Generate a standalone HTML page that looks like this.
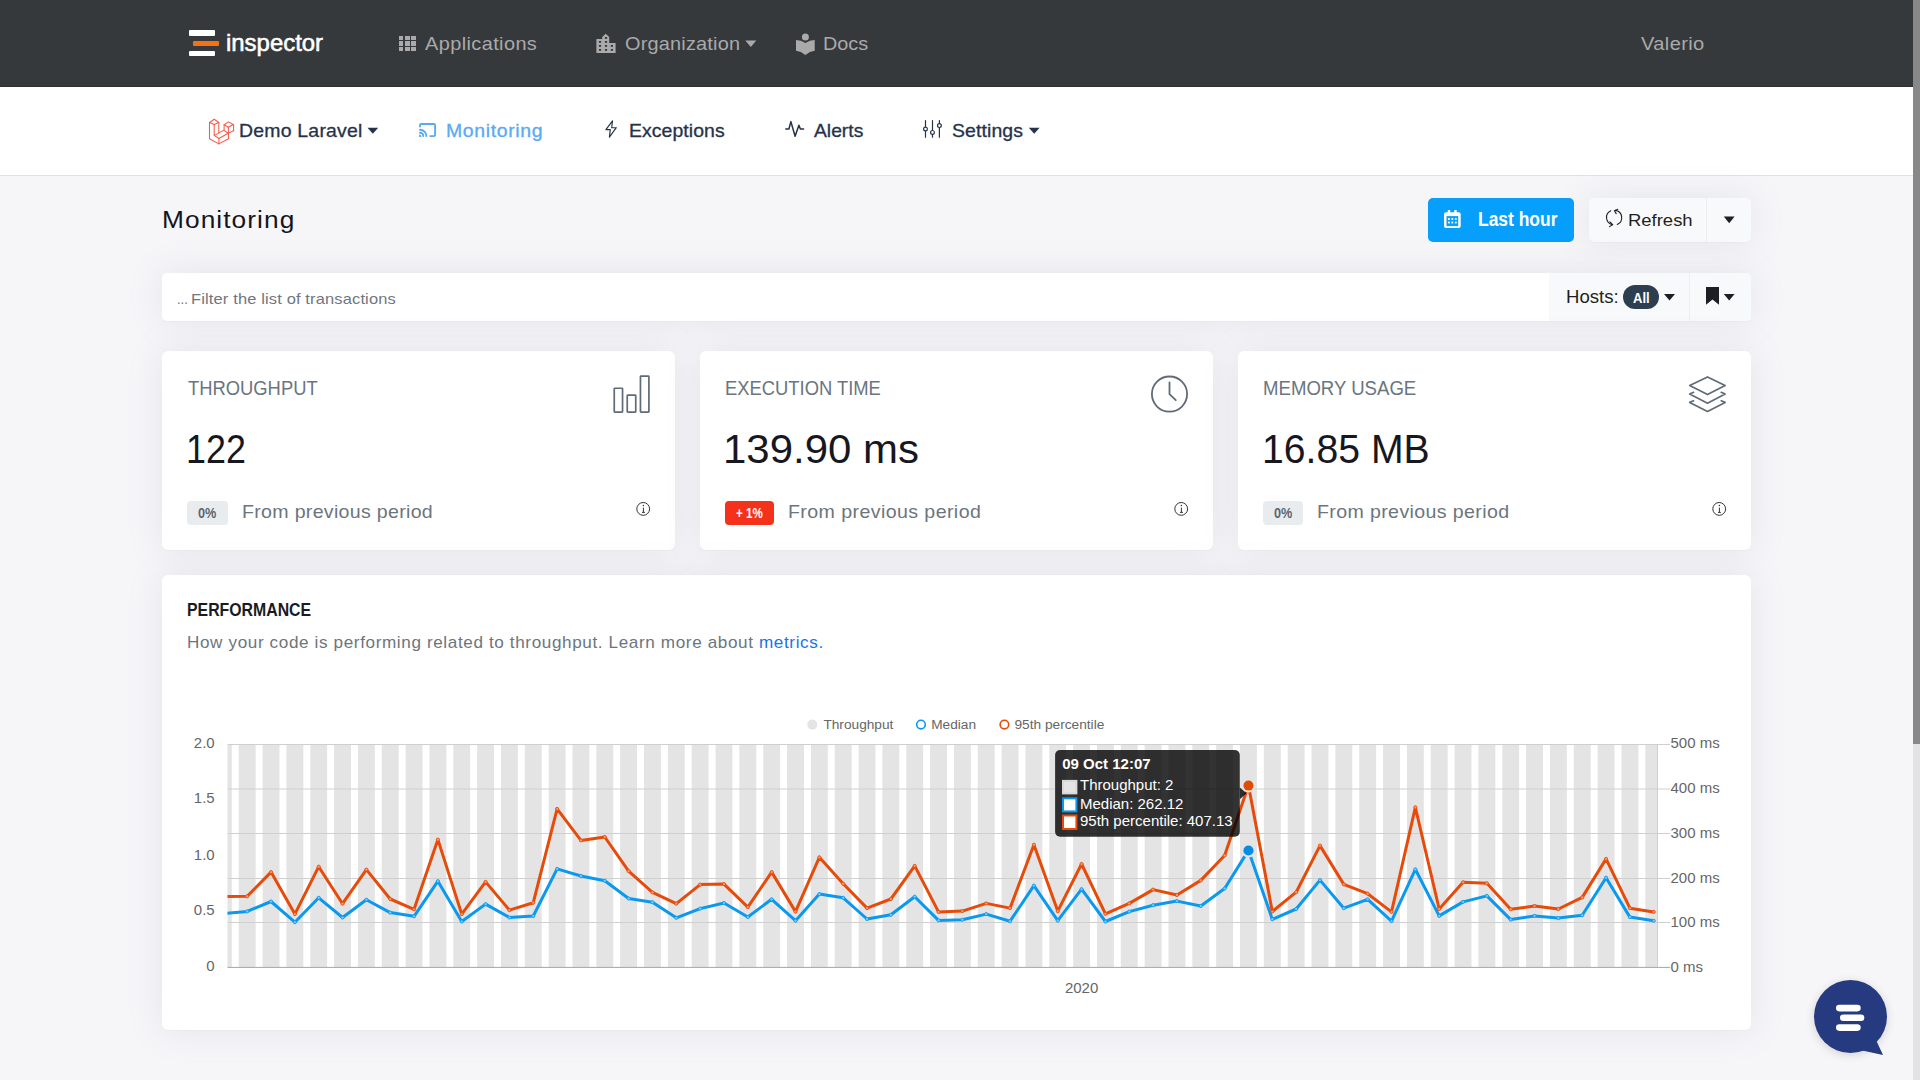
<!DOCTYPE html>
<html><head><meta charset="utf-8"><title>Monitoring</title>
<style>
html,body{margin:0;padding:0;}
body{width:1920px;height:1080px;overflow:hidden;position:relative;background:#f6f6f9;font-family:"Liberation Sans",sans-serif;}
.t{position:absolute;white-space:nowrap;line-height:1;}
.r{position:absolute;}
.ch{position:absolute;left:0;top:0;overflow:visible;}
.ax{font-family:"Liberation Sans",sans-serif;font-size:15px;fill:#666666;}
.lg{font-family:"Liberation Sans",sans-serif;font-size:13.7px;fill:#666666;}
.tt{font-family:"Liberation Sans",sans-serif;font-size:15px;fill:#ffffff;}
</style></head><body>
<div class="r" style="left:0;top:0;width:1920px;height:86px;background:#36393c;border-bottom:1px solid #2b2e31"></div>
<div class="r" style="left:0;top:87px;width:1920px;height:88px;background:#ffffff;border-bottom:1px solid #dee2e6"></div>
<div class="r" style="left:1428px;top:198px;width:146px;height:44px;background:#069ffb;border-radius:5px"></div>
<div class="r" style="left:1589px;top:198px;width:162px;height:44px;background:#f8f9fa;border-radius:5px;box-shadow:0 0 35px 0 rgba(145,145,155,0.16),0 1px 1px rgba(0,0,0,0.02)"></div>
<div class="r" style="left:1706px;top:198px;width:1px;height:44px;background:#eceef0"></div>
<div class="r" style="left:162px;top:273px;width:1589px;height:48px;background:#ffffff;border-radius:5px;box-shadow:0 0 35px 0 rgba(145,145,155,0.16),0 1px 1px rgba(0,0,0,0.02)"></div>
<div class="r" style="left:1549px;top:273px;width:202px;height:48px;background:#f8f9fa;border-radius:0 5px 5px 0"></div>
<div class="r" style="left:1689px;top:273px;width:1px;height:48px;background:#eceef0"></div>
<div class="r" style="left:1623px;top:285px;width:36px;height:24px;background:#2c3e50;border-radius:12px"></div>
<div class="r" style="left:162px;top:351px;width:513px;height:199px;background:#fff;border-radius:6px;box-shadow:0 0 35px 0 rgba(145,145,155,0.16),0 1px 1px rgba(0,0,0,0.02)"></div>
<div class="r" style="left:700px;top:351px;width:513px;height:199px;background:#fff;border-radius:6px;box-shadow:0 0 35px 0 rgba(145,145,155,0.16),0 1px 1px rgba(0,0,0,0.02)"></div>
<div class="r" style="left:1238px;top:351px;width:513px;height:199px;background:#fff;border-radius:6px;box-shadow:0 0 35px 0 rgba(145,145,155,0.16),0 1px 1px rgba(0,0,0,0.02)"></div>
<div class="r" style="left:187px;top:501px;width:41px;height:24px;background:#e9ecef;border-radius:4px"></div>
<div class="r" style="left:725px;top:501px;width:49px;height:24px;background:#f4321c;border-radius:4px"></div>
<div class="r" style="left:1263px;top:501px;width:40px;height:24px;background:#e9ecef;border-radius:4px"></div>
<div class="r" style="left:162px;top:575px;width:1589px;height:455px;background:#fff;border-radius:6px;box-shadow:0 0 35px 0 rgba(145,145,155,0.16),0 1px 1px rgba(0,0,0,0.02)"></div>
<div class="t" style="left:226.20px;top:31px;font-size:24.00px;font-weight:400;color:#ffffff;letter-spacing:0.000px;transform:scaleX(0.9970);transform-origin:0 0;-webkit-text-stroke:0.55px #ffffff;">inspector</div>
<div class="t" style="left:425.20px;top:35px;font-size:18.60px;font-weight:400;color:#aaaaaa;letter-spacing:0.386px;transform:scaleX(1.0700);transform-origin:0 0;">Applications</div>
<div class="t" style="left:625.30px;top:35px;font-size:18.60px;font-weight:400;color:#aaaaaa;letter-spacing:0.192px;transform:scaleX(1.0700);transform-origin:0 0;">Organization</div>
<div class="t" style="left:823.43px;top:35px;font-size:18.60px;font-weight:400;color:#aaaaaa;letter-spacing:0.000px;transform:scaleX(1.0666);transform-origin:0 0;">Docs</div>
<div class="t" style="left:1641.00px;top:35px;font-size:18.75px;font-weight:400;color:#aaaaaa;letter-spacing:0.358px;transform:scaleX(1.0700);transform-origin:0 0;">Valerio</div>
<div class="t" style="left:239.03px;top:122px;font-size:18.17px;font-weight:400;color:#25324a;letter-spacing:0.207px;transform:scaleX(1.0700);transform-origin:0 0;-webkit-text-stroke:0.3px #25324a;">Demo Laravel</div>
<div class="t" style="left:446.23px;top:122px;font-size:18.17px;font-weight:400;color:#5aaaf3;letter-spacing:0.596px;transform:scaleX(1.0700);transform-origin:0 0;-webkit-text-stroke:0.3px #5aaaf3;">Monitoring</div>
<div class="t" style="left:629.23px;top:122px;font-size:18.17px;font-weight:400;color:#25324a;letter-spacing:0.065px;transform:scaleX(1.0700);transform-origin:0 0;-webkit-text-stroke:0.3px #25324a;">Exceptions</div>
<div class="t" style="left:814.20px;top:122px;font-size:18.17px;font-weight:400;color:#25324a;letter-spacing:0.000px;transform:scaleX(1.0619);transform-origin:0 0;-webkit-text-stroke:0.3px #25324a;">Alerts</div>
<div class="t" style="left:952.00px;top:122px;font-size:18.17px;font-weight:400;color:#25324a;letter-spacing:0.105px;transform:scaleX(1.0700);transform-origin:0 0;-webkit-text-stroke:0.3px #25324a;">Settings</div>
<div class="t" style="left:162.16px;top:208px;font-size:24.56px;font-weight:400;color:#14151c;letter-spacing:1.003px;transform:scaleX(1.0700);transform-origin:0 0;">Monitoring</div>
<div class="t" style="left:1478.10px;top:210px;font-size:19.33px;font-weight:700;color:#ffffff;letter-spacing:0.000px;transform:scaleX(0.9025);transform-origin:0 0;">Last hour</div>
<div class="t" style="left:1627.63px;top:212px;font-size:17.30px;font-weight:400;color:#1d1f24;letter-spacing:-0.000px;transform:scaleX(1.0679);transform-origin:0 0;">Refresh</div>
<div class="t" style="left:176.91px;top:291px;font-size:15.41px;font-weight:400;color:#6c757d;letter-spacing:0.000px;transform:scaleX(0.8387);transform-origin:0 0;">...</div>
<div class="t" style="left:190.73px;top:291px;font-size:15.41px;font-weight:400;color:#6f777f;letter-spacing:0.128px;transform:scaleX(1.0700);transform-origin:0 0;">Filter the list of transactions</div>
<div class="t" style="left:1566.14px;top:289px;font-size:17.59px;font-weight:400;color:#1d1f24;letter-spacing:-0.000px;transform:scaleX(1.0557);transform-origin:0 0;">Hosts:</div>
<div class="t" style="left:1632.50px;top:290px;font-size:15.41px;font-weight:700;color:#ffffff;letter-spacing:0.000px;transform:scaleX(0.8458);transform-origin:0 0;">All</div>
<div class="t" style="left:188.10px;top:379px;font-size:19.91px;font-weight:400;color:#6a7580;letter-spacing:0.000px;transform:scaleX(0.9231);transform-origin:0 0;">THROUGHPUT</div>
<div class="t" style="left:186.06px;top:429px;font-size:40.80px;font-weight:400;color:#17181f;letter-spacing:0.000px;transform:scaleX(0.8788);transform-origin:0 0;">122</div>
<div class="t" style="left:242.43px;top:503px;font-size:18.31px;font-weight:400;color:#6c757d;letter-spacing:0.283px;transform:scaleX(1.0700);transform-origin:0 0;">From previous period</div>
<div class="t" style="left:724.58px;top:379px;font-size:19.91px;font-weight:400;color:#6a7580;letter-spacing:0.000px;transform:scaleX(0.9230);transform-origin:0 0;">EXECUTION TIME</div>
<div class="t" style="left:722.71px;top:429px;font-size:40.80px;font-weight:400;color:#17181f;letter-spacing:-0.000px;transform:scaleX(1.0285);transform-origin:0 0;">139.90 ms</div>
<div class="t" style="left:787.83px;top:503px;font-size:18.31px;font-weight:400;color:#6c757d;letter-spacing:0.386px;transform:scaleX(1.0700);transform-origin:0 0;">From previous period</div>
<div class="t" style="left:1262.87px;top:379px;font-size:19.91px;font-weight:400;color:#6a7580;letter-spacing:0.000px;transform:scaleX(0.9340);transform-origin:0 0;">MEMORY USAGE</div>
<div class="t" style="left:1261.82px;top:429px;font-size:40.80px;font-weight:400;color:#17181f;letter-spacing:0.000px;transform:scaleX(0.9600);transform-origin:0 0;">16.85 MB</div>
<div class="t" style="left:1317.23px;top:503px;font-size:18.31px;font-weight:400;color:#6c757d;letter-spacing:0.347px;transform:scaleX(1.0700);transform-origin:0 0;">From previous period</div>
<div class="t" style="left:198.20px;top:505px;font-size:15.12px;font-weight:700;color:#5b6671;letter-spacing:0.000px;transform:scaleX(0.8392);transform-origin:0 0;">0%</div>
<div class="t" style="left:735.90px;top:505px;font-size:15.12px;font-weight:700;color:#ffffff;letter-spacing:0.000px;transform:scaleX(0.7650);transform-origin:0 0;">+ 1%</div>
<div class="t" style="left:1274.20px;top:505px;font-size:15.12px;font-weight:700;color:#5b6671;letter-spacing:0.000px;transform:scaleX(0.8392);transform-origin:0 0;">0%</div>
<div class="t" style="left:187.13px;top:601px;font-size:18.17px;font-weight:700;color:#1a1b22;letter-spacing:0.000px;transform:scaleX(0.8723);transform-origin:0 0;">PERFORMANCE</div>
<div class="t" style="left:186.93px;top:635px;font-size:15.99px;font-weight:400;color:#6c757d;letter-spacing:0.583px;transform:scaleX(1.0700);transform-origin:0 0;">How your code is performing related to throughput. Learn more about <span style="color:#1a73e8">metrics.</span></div>
<div class="r" style="left:189.2px;top:30.4px;width:25.8px;height:5.4px;background:#fff;border-radius:1px"></div>
<div class="r" style="left:193px;top:40.8px;width:26px;height:5.45px;background:#f47216;border-radius:1px"></div>
<div class="r" style="left:189.2px;top:50.8px;width:25.8px;height:5.45px;background:#fff;border-radius:1px"></div>
<div class="r" style="left:398.80px;top:35.80px;width:4.6px;height:4.4px;background:#aaaaaa"></div>
<div class="r" style="left:405.05px;top:35.80px;width:4.6px;height:4.4px;background:#aaaaaa"></div>
<div class="r" style="left:411.30px;top:35.80px;width:4.6px;height:4.4px;background:#aaaaaa"></div>
<div class="r" style="left:398.80px;top:41.40px;width:4.6px;height:4.4px;background:#aaaaaa"></div>
<div class="r" style="left:405.05px;top:41.40px;width:4.6px;height:4.4px;background:#aaaaaa"></div>
<div class="r" style="left:411.30px;top:41.40px;width:4.6px;height:4.4px;background:#aaaaaa"></div>
<div class="r" style="left:398.80px;top:47.00px;width:4.6px;height:4.4px;background:#aaaaaa"></div>
<div class="r" style="left:405.05px;top:47.00px;width:4.6px;height:4.4px;background:#aaaaaa"></div>
<div class="r" style="left:411.30px;top:47.00px;width:4.6px;height:4.4px;background:#aaaaaa"></div>
<svg class="ch" width="1920" height="1080" viewBox="0 0 1920 1080">
<g fill="#aaaaaa"><path d="M596.4,52.9 V39.1 H602.2 V36.9 L605.7,33.8 L609.2,36.9 V43 H615.6 V52.9 Z"/></g>
<g fill="#36393c"><rect x="604.9" y="37.0" width="2.2" height="1.8"/><rect x="598.9" y="41.0" width="2.2" height="1.8"/><rect x="604.9" y="41.0" width="2.2" height="1.8"/><rect x="598.9" y="45.0" width="2.2" height="1.8"/><rect x="604.9" y="45.0" width="2.2" height="1.8"/><rect x="610.8" y="45.0" width="2.2" height="1.8"/><rect x="598.9" y="49.0" width="2.2" height="1.8"/><rect x="604.9" y="49.0" width="2.2" height="1.8"/><rect x="610.8" y="49.0" width="2.2" height="1.8"/></g>
<polygon points="745.3,40.6 756.3,40.6 750.8,46.9" fill="#aaaaaa"/>
<circle cx="805.4" cy="36.9" r="3.5" fill="#aaaaaa"/>
<path d="M796,39.9 Q801,40 805.4,43 Q809.8,40 814.7,39.9 V50.8 Q809.8,51.2 805.4,54.9 Q801,51.2 796,50.8 Z" fill="#aaaaaa"/>
<g fill="none" stroke="#f35b4a" stroke-width="1.05" stroke-linejoin="round" stroke-linecap="round"><path d="M209.5,122.5 L214.2,119.2 L218.8,122.5 L214.2,124.5 Z"/><path d="M209.5,122.5 V138.8 L218.9,143.9 L228.5,138.8 V133.3"/><path d="M214.2,124.5 V135.4 L218.9,138.5 V143.9"/><path d="M218.8,122.5 V132.6"/><path d="M214.4,135.4 L223.7,130.4"/><path d="M218.9,138.5 L228.2,133.3"/><path d="M224.1,124.7 L228.5,121.9 L233.2,124.5 L228.4,127.2 Z"/><path d="M224.1,124.7 V130.4 L228.2,133.3 L233.6,130.7 V124.5"/><path d="M228.4,127.2 V133.3"/></g>
<polygon points="367.5,127.7 378.2,127.7 372.85,133.7" fill="#25324a"/>
<g fill="none" stroke="#5aaaf3" stroke-width="1.9" stroke-linecap="round"><path d="M420,126.6 V125.3 Q420,124 421.3,124 H433.8 Q435.1,124 435.1,125.3 V134.8 Q435.1,136.1 433.8,136.1 H430.2"/><path d="M420,129.7 A6.4,6.4 0 0 1 426.4,136.1"/><path d="M420,132.8 A3.3,3.3 0 0 1 423.3,136.1"/></g><path d="M419.1,134.6 A2.4,2.4 0 0 1 421.5,137 H419.1 Z" fill="#5aaaf3"/>
<path d="M612.5,120.9 L605.9,129.6 H610.3 L609.4,137.1 L616.3,127.7 H611.7 Z" fill="none" stroke="#25324a" stroke-width="1.15" stroke-linejoin="round"/>
<polyline points="785.8,129.1 788.9,129.1 790.9,121.6 795.1,136.3 798.9,125.2 800.4,129.1 803.6,129.1" fill="none" stroke="#25324a" stroke-width="1.5" stroke-linejoin="round" stroke-linecap="round"/>
<g stroke="#25324a" stroke-width="1.2" fill="none" stroke-linecap="round"><path d="M925.5,120.6 V137.2 M932.5,120.6 V137.2 M939.4,120.6 V137.2"/></g><g fill="#fff" stroke="#25324a" stroke-width="1.2"><circle cx="925.5" cy="129" r="1.9"/><circle cx="932.5" cy="132.4" r="1.9"/><circle cx="939.4" cy="125.6" r="1.9"/></g>
<polygon points="1028.8,127.7 1039.6,127.7 1034.2,133.7" fill="#25324a"/>
<g fill="#fff"><rect x="1444" y="212.2" width="16.7" height="15.9" rx="2"/><rect x="1447.8" y="210" width="2.4" height="4"/><rect x="1454.3" y="210" width="2.4" height="4"/></g><rect x="1446.5" y="216.1" width="11.7" height="10" fill="#069ffb"/><g fill="#fff"><rect x="1448" y="218.1" width="1.8" height="1.8"/><rect x="1448" y="221.6" width="1.8" height="1.8"/><rect x="1451.4" y="218.1" width="1.8" height="1.8"/><rect x="1451.4" y="221.6" width="1.8" height="1.8"/><rect x="1454.9" y="218.1" width="1.8" height="1.8"/><rect x="1454.9" y="221.6" width="1.8" height="1.8"/></g>
<g fill="none" stroke="#1d1f24" stroke-width="1.1" stroke-linecap="round"><path d="M1610.8,210.8 A7.3,7.3 0 0 0 1612.4,224.6"/><path d="M1609.9,221.8 L1612.6,224.7 L1609.5,226.6"/><path d="M1617.2,224.4 A7.3,7.3 0 0 0 1615.2,210.4"/><path d="M1617.8,209.2 L1614.5,210.7 L1616.2,213.6"/></g>
<polygon points="1723.8,216.6 1734.6,216.6 1729.2,223.2" fill="#1d1f24"/>
<polygon points="1664,294 1675,294 1669.5,300.4" fill="#1d1f24"/>
<path d="M1706,287 H1719 V304.8 L1712.5,299.5 L1706,304.8 Z" fill="#1d1f24"/>
<polygon points="1723.8,294 1734.6,294 1729.2,300.4" fill="#1d1f24"/>
<g fill="none" stroke="#5f6b78" stroke-width="1.7"><rect x="614.25" y="388.25" width="8.3" height="23.9" rx="0.6"/><rect x="627.25" y="395.15" width="8.5" height="17" rx="0.6"/><rect x="640.45" y="376.15" width="8.45" height="36" rx="0.6"/></g>
<g fill="none" stroke="#5f6b78" stroke-width="1.8"><circle cx="1169.5" cy="394.1" r="17.6"/><path d="M1169.5,382.3 V394.1 L1175.8,400.2" stroke-linecap="round" stroke-linejoin="round"/></g>
<g fill="none" stroke="#5f6b78" stroke-width="1.7" stroke-linejoin="round" stroke-linecap="round"><path d="M1707.5,376.9 L1725.1,385.6 L1707.5,394.6 L1689.7,385.6 Z"/><path d="M1693.6,392.3 L1689.7,394.1 L1707.5,403.2 L1725.1,394.1 L1721.2,392.3"/><path d="M1693.6,400.8 L1689.7,402.4 L1707.5,411.5 L1725.1,402.4 L1721.2,400.8"/></g>
<circle cx="643.2" cy="508.9" r="6.4" fill="none" stroke="#2f353b" stroke-width="1"/><circle cx="643.4" cy="505.6" r="0.75" fill="#2f353b"/><path d="M643.4,507.6 V512.3 M642.0,512.4 H644.9" stroke="#2f353b" stroke-width="1"/>
<circle cx="1181.2" cy="508.9" r="6.4" fill="none" stroke="#2f353b" stroke-width="1"/><circle cx="1181.4" cy="505.6" r="0.75" fill="#2f353b"/><path d="M1181.4,507.6 V512.3 M1180.0,512.4 H1182.9" stroke="#2f353b" stroke-width="1"/>
<circle cx="1719.2" cy="508.9" r="6.4" fill="none" stroke="#2f353b" stroke-width="1"/><circle cx="1719.4" cy="505.6" r="0.75" fill="#2f353b"/><path d="M1719.4,507.6 V512.3 M1718.0,512.4 H1720.9" stroke="#2f353b" stroke-width="1"/>
</svg>
<svg class="ch" width="1920" height="1080" viewBox="0 0 1920 1080">
<defs><clipPath id="pc"><rect x="227.5" y="738.5" width="1430.0" height="234.89999999999998"/></clipPath><clipPath id="pb"><rect x="227.5" y="744.5" width="1430.0" height="222.89999999999998"/></clipPath></defs>
<g clip-path="url(#pb)" fill="#e4e4e4">
<rect x="214.90" y="744.5" width="16.9" height="222.89999999999998"/>
<rect x="238.74" y="744.5" width="16.9" height="222.89999999999998"/>
<rect x="262.58" y="744.5" width="16.9" height="222.89999999999998"/>
<rect x="286.42" y="744.5" width="16.9" height="222.89999999999998"/>
<rect x="310.26" y="744.5" width="16.9" height="222.89999999999998"/>
<rect x="334.10" y="744.5" width="16.9" height="222.89999999999998"/>
<rect x="357.94" y="744.5" width="16.9" height="222.89999999999998"/>
<rect x="381.78" y="744.5" width="16.9" height="222.89999999999998"/>
<rect x="405.62" y="744.5" width="16.9" height="222.89999999999998"/>
<rect x="429.46" y="744.5" width="16.9" height="222.89999999999998"/>
<rect x="453.30" y="744.5" width="16.9" height="222.89999999999998"/>
<rect x="477.14" y="744.5" width="16.9" height="222.89999999999998"/>
<rect x="500.98" y="744.5" width="16.9" height="222.89999999999998"/>
<rect x="524.82" y="744.5" width="16.9" height="222.89999999999998"/>
<rect x="548.66" y="744.5" width="16.9" height="222.89999999999998"/>
<rect x="572.50" y="744.5" width="16.9" height="222.89999999999998"/>
<rect x="596.34" y="744.5" width="16.9" height="222.89999999999998"/>
<rect x="620.18" y="744.5" width="16.9" height="222.89999999999998"/>
<rect x="644.02" y="744.5" width="16.9" height="222.89999999999998"/>
<rect x="667.86" y="744.5" width="16.9" height="222.89999999999998"/>
<rect x="691.70" y="744.5" width="16.9" height="222.89999999999998"/>
<rect x="715.54" y="744.5" width="16.9" height="222.89999999999998"/>
<rect x="739.38" y="744.5" width="16.9" height="222.89999999999998"/>
<rect x="763.22" y="744.5" width="16.9" height="222.89999999999998"/>
<rect x="787.06" y="744.5" width="16.9" height="222.89999999999998"/>
<rect x="810.90" y="744.5" width="16.9" height="222.89999999999998"/>
<rect x="834.74" y="744.5" width="16.9" height="222.89999999999998"/>
<rect x="858.58" y="744.5" width="16.9" height="222.89999999999998"/>
<rect x="882.42" y="744.5" width="16.9" height="222.89999999999998"/>
<rect x="906.26" y="744.5" width="16.9" height="222.89999999999998"/>
<rect x="930.10" y="744.5" width="16.9" height="222.89999999999998"/>
<rect x="953.94" y="744.5" width="16.9" height="222.89999999999998"/>
<rect x="977.78" y="744.5" width="16.9" height="222.89999999999998"/>
<rect x="1001.62" y="744.5" width="16.9" height="222.89999999999998"/>
<rect x="1025.46" y="744.5" width="16.9" height="222.89999999999998"/>
<rect x="1049.30" y="744.5" width="16.9" height="222.89999999999998"/>
<rect x="1073.14" y="744.5" width="16.9" height="222.89999999999998"/>
<rect x="1096.98" y="744.5" width="16.9" height="222.89999999999998"/>
<rect x="1120.82" y="744.5" width="16.9" height="222.89999999999998"/>
<rect x="1144.66" y="744.5" width="16.9" height="222.89999999999998"/>
<rect x="1168.50" y="744.5" width="16.9" height="222.89999999999998"/>
<rect x="1192.34" y="744.5" width="16.9" height="222.89999999999998"/>
<rect x="1216.18" y="744.5" width="16.9" height="222.89999999999998"/>
<rect x="1240.02" y="744.5" width="16.9" height="222.89999999999998"/>
<rect x="1263.86" y="744.5" width="16.9" height="222.89999999999998"/>
<rect x="1287.70" y="744.5" width="16.9" height="222.89999999999998"/>
<rect x="1311.54" y="744.5" width="16.9" height="222.89999999999998"/>
<rect x="1335.38" y="744.5" width="16.9" height="222.89999999999998"/>
<rect x="1359.22" y="744.5" width="16.9" height="222.89999999999998"/>
<rect x="1383.06" y="744.5" width="16.9" height="222.89999999999998"/>
<rect x="1406.90" y="744.5" width="16.9" height="222.89999999999998"/>
<rect x="1430.74" y="744.5" width="16.9" height="222.89999999999998"/>
<rect x="1454.58" y="744.5" width="16.9" height="222.89999999999998"/>
<rect x="1478.42" y="744.5" width="16.9" height="222.89999999999998"/>
<rect x="1502.26" y="744.5" width="16.9" height="222.89999999999998"/>
<rect x="1526.10" y="744.5" width="16.9" height="222.89999999999998"/>
<rect x="1549.94" y="744.5" width="16.9" height="222.89999999999998"/>
<rect x="1573.78" y="744.5" width="16.9" height="222.89999999999998"/>
<rect x="1597.62" y="744.5" width="16.9" height="222.89999999999998"/>
<rect x="1621.46" y="744.5" width="16.9" height="222.89999999999998"/>
<rect x="1645.30" y="744.5" width="16.9" height="222.89999999999998"/>
</g>
<rect x="227.5" y="744.0" width="1442.5" height="1" fill="#cfcfcf"/>
<rect x="227.5" y="788.5" width="1442.5" height="1" fill="#cfcfcf"/>
<rect x="227.5" y="833.0" width="1442.5" height="1" fill="#cfcfcf"/>
<rect x="227.5" y="878.0" width="1442.5" height="1" fill="#cfcfcf"/>
<rect x="227.5" y="922.0" width="1442.5" height="1" fill="#cfcfcf"/>
<rect x="227.5" y="966.9" width="1442.5" height="1" fill="#a6a6a6"/>
<rect x="1657.0" y="744.0" width="1" height="222.89999999999998" fill="#cfcfcf"/>
<text x="214.7" y="747.8" text-anchor="end" class="ax">2.0</text>
<text x="214.7" y="803.4" text-anchor="end" class="ax">1.5</text>
<text x="214.7" y="859.6" text-anchor="end" class="ax">1.0</text>
<text x="214.7" y="915.1" text-anchor="end" class="ax">0.5</text>
<text x="214.7" y="971.2" text-anchor="end" class="ax">0</text>
<text x="1670.5" y="747.8" class="ax">500 ms</text>
<text x="1670.5" y="792.8" class="ax">400 ms</text>
<text x="1670.5" y="837.8" class="ax">300 ms</text>
<text x="1670.5" y="882.8" class="ax">200 ms</text>
<text x="1670.5" y="927.1" class="ax">100 ms</text>
<text x="1670.5" y="971.8" class="ax">0 ms</text>
<text x="1081.6" y="993" text-anchor="middle" class="ax">2020</text>
<circle cx="812.3" cy="724.6" r="5" fill="#e4e4e4"/>
<text x="823.4" y="729" class="lg">Throughput</text>
<circle cx="921" cy="724.6" r="4.3" fill="none" stroke="#0a99ef" stroke-width="1.6"/>
<text x="931.2" y="729" class="lg">Median</text>
<circle cx="1004.4" cy="724.6" r="4.3" fill="none" stroke="#e64b0a" stroke-width="1.6"/>
<text x="1014.5" y="729" class="lg">95th percentile</text>
<g clip-path="url(#pc)"><polyline points="223.35,913.7 247.19,911.4 271.03,901.5 294.87,922.2 318.71,897.8 342.55,917.5 366.39,899.7 390.23,912.6 414.07,916.3 437.91,881.2 461.75,921.5 485.59,904.1 509.43,917.5 533.27,916.0 557.11,868.9 580.95,876.0 604.79,880.7 628.63,898.5 652.47,902.2 676.31,917.8 700.15,908.6 723.99,903.0 747.83,917.0 771.67,899.3 795.51,920.7 819.35,894.1 843.19,897.8 867.03,919.0 890.87,914.8 914.71,896.7 938.55,920.4 962.39,919.7 986.23,914.1 1010.07,921.2 1033.91,885.6 1057.75,920.7 1081.59,889.2 1105.43,921.5 1129.27,911.6 1153.11,905.2 1176.95,901.1 1200.79,906.0 1224.63,888.5 1248.47,850.4 1272.31,919.3 1296.15,909.0 1319.99,880.1 1343.83,908.2 1367.67,899.3 1391.51,921.1 1415.35,869.3 1439.19,915.9 1463.03,901.9 1486.87,895.9 1510.71,919.6 1534.55,915.9 1558.39,918.1 1582.23,915.2 1606.07,877.7 1629.91,917.1 1653.75,920.8" fill="none" stroke="#0a99ef" stroke-width="3" stroke-linejoin="round"/>
<polyline points="223.35,896.6 247.19,896.3 271.03,872.1 294.87,914.1 318.71,866.7 342.55,903.7 366.39,869.6 390.23,899.0 414.07,909.3 437.91,839.6 461.75,914.1 485.59,881.9 509.43,910.1 533.27,902.7 557.11,808.9 580.95,840.4 604.79,837.0 628.63,871.1 652.47,892.3 676.31,903.7 700.15,884.6 723.99,884.1 747.83,907.1 771.67,872.1 795.51,911.6 819.35,857.3 843.19,883.7 867.03,908.1 890.87,899.0 914.71,865.9 938.55,911.9 962.39,911.1 986.23,903.4 1010.07,908.1 1033.91,844.7 1057.75,911.1 1081.59,864.0 1105.43,913.8 1129.27,903.4 1153.11,889.6 1176.95,895.0 1200.79,880.4 1224.63,855.5 1248.47,785.6 1272.31,911.5 1296.15,892.2 1319.99,845.6 1343.83,884.4 1367.67,893.7 1391.51,911.9 1415.35,807.3 1439.19,909.0 1463.03,882.3 1486.87,883.3 1510.71,909.3 1534.55,906.0 1558.39,909.0 1582.23,897.4 1606.07,858.9 1629.91,908.2 1653.75,911.9" fill="none" stroke="#e64b0a" stroke-width="3" stroke-linejoin="round"/>
<circle cx="223.35" cy="913.7" r="1.6" fill="#7cc8f7" stroke="#0a99ef" stroke-width="0.8"/>
<circle cx="223.35" cy="896.6" r="1.6" fill="#f29a73" stroke="#e64b0a" stroke-width="0.8"/>
<circle cx="247.19" cy="911.4" r="1.6" fill="#7cc8f7" stroke="#0a99ef" stroke-width="0.8"/>
<circle cx="247.19" cy="896.3" r="1.6" fill="#f29a73" stroke="#e64b0a" stroke-width="0.8"/>
<circle cx="271.03" cy="901.5" r="1.6" fill="#7cc8f7" stroke="#0a99ef" stroke-width="0.8"/>
<circle cx="271.03" cy="872.1" r="1.6" fill="#f29a73" stroke="#e64b0a" stroke-width="0.8"/>
<circle cx="294.87" cy="922.2" r="1.6" fill="#7cc8f7" stroke="#0a99ef" stroke-width="0.8"/>
<circle cx="294.87" cy="914.1" r="1.6" fill="#f29a73" stroke="#e64b0a" stroke-width="0.8"/>
<circle cx="318.71" cy="897.8" r="1.6" fill="#7cc8f7" stroke="#0a99ef" stroke-width="0.8"/>
<circle cx="318.71" cy="866.7" r="1.6" fill="#f29a73" stroke="#e64b0a" stroke-width="0.8"/>
<circle cx="342.55" cy="917.5" r="1.6" fill="#7cc8f7" stroke="#0a99ef" stroke-width="0.8"/>
<circle cx="342.55" cy="903.7" r="1.6" fill="#f29a73" stroke="#e64b0a" stroke-width="0.8"/>
<circle cx="366.39" cy="899.7" r="1.6" fill="#7cc8f7" stroke="#0a99ef" stroke-width="0.8"/>
<circle cx="366.39" cy="869.6" r="1.6" fill="#f29a73" stroke="#e64b0a" stroke-width="0.8"/>
<circle cx="390.23" cy="912.6" r="1.6" fill="#7cc8f7" stroke="#0a99ef" stroke-width="0.8"/>
<circle cx="390.23" cy="899.0" r="1.6" fill="#f29a73" stroke="#e64b0a" stroke-width="0.8"/>
<circle cx="414.07" cy="916.3" r="1.6" fill="#7cc8f7" stroke="#0a99ef" stroke-width="0.8"/>
<circle cx="414.07" cy="909.3" r="1.6" fill="#f29a73" stroke="#e64b0a" stroke-width="0.8"/>
<circle cx="437.91" cy="881.2" r="1.6" fill="#7cc8f7" stroke="#0a99ef" stroke-width="0.8"/>
<circle cx="437.91" cy="839.6" r="1.6" fill="#f29a73" stroke="#e64b0a" stroke-width="0.8"/>
<circle cx="461.75" cy="921.5" r="1.6" fill="#7cc8f7" stroke="#0a99ef" stroke-width="0.8"/>
<circle cx="461.75" cy="914.1" r="1.6" fill="#f29a73" stroke="#e64b0a" stroke-width="0.8"/>
<circle cx="485.59" cy="904.1" r="1.6" fill="#7cc8f7" stroke="#0a99ef" stroke-width="0.8"/>
<circle cx="485.59" cy="881.9" r="1.6" fill="#f29a73" stroke="#e64b0a" stroke-width="0.8"/>
<circle cx="509.43" cy="917.5" r="1.6" fill="#7cc8f7" stroke="#0a99ef" stroke-width="0.8"/>
<circle cx="509.43" cy="910.1" r="1.6" fill="#f29a73" stroke="#e64b0a" stroke-width="0.8"/>
<circle cx="533.27" cy="916.0" r="1.6" fill="#7cc8f7" stroke="#0a99ef" stroke-width="0.8"/>
<circle cx="533.27" cy="902.7" r="1.6" fill="#f29a73" stroke="#e64b0a" stroke-width="0.8"/>
<circle cx="557.11" cy="868.9" r="1.6" fill="#7cc8f7" stroke="#0a99ef" stroke-width="0.8"/>
<circle cx="557.11" cy="808.9" r="1.6" fill="#f29a73" stroke="#e64b0a" stroke-width="0.8"/>
<circle cx="580.95" cy="876.0" r="1.6" fill="#7cc8f7" stroke="#0a99ef" stroke-width="0.8"/>
<circle cx="580.95" cy="840.4" r="1.6" fill="#f29a73" stroke="#e64b0a" stroke-width="0.8"/>
<circle cx="604.79" cy="880.7" r="1.6" fill="#7cc8f7" stroke="#0a99ef" stroke-width="0.8"/>
<circle cx="604.79" cy="837.0" r="1.6" fill="#f29a73" stroke="#e64b0a" stroke-width="0.8"/>
<circle cx="628.63" cy="898.5" r="1.6" fill="#7cc8f7" stroke="#0a99ef" stroke-width="0.8"/>
<circle cx="628.63" cy="871.1" r="1.6" fill="#f29a73" stroke="#e64b0a" stroke-width="0.8"/>
<circle cx="652.47" cy="902.2" r="1.6" fill="#7cc8f7" stroke="#0a99ef" stroke-width="0.8"/>
<circle cx="652.47" cy="892.3" r="1.6" fill="#f29a73" stroke="#e64b0a" stroke-width="0.8"/>
<circle cx="676.31" cy="917.8" r="1.6" fill="#7cc8f7" stroke="#0a99ef" stroke-width="0.8"/>
<circle cx="676.31" cy="903.7" r="1.6" fill="#f29a73" stroke="#e64b0a" stroke-width="0.8"/>
<circle cx="700.15" cy="908.6" r="1.6" fill="#7cc8f7" stroke="#0a99ef" stroke-width="0.8"/>
<circle cx="700.15" cy="884.6" r="1.6" fill="#f29a73" stroke="#e64b0a" stroke-width="0.8"/>
<circle cx="723.99" cy="903.0" r="1.6" fill="#7cc8f7" stroke="#0a99ef" stroke-width="0.8"/>
<circle cx="723.99" cy="884.1" r="1.6" fill="#f29a73" stroke="#e64b0a" stroke-width="0.8"/>
<circle cx="747.83" cy="917.0" r="1.6" fill="#7cc8f7" stroke="#0a99ef" stroke-width="0.8"/>
<circle cx="747.83" cy="907.1" r="1.6" fill="#f29a73" stroke="#e64b0a" stroke-width="0.8"/>
<circle cx="771.67" cy="899.3" r="1.6" fill="#7cc8f7" stroke="#0a99ef" stroke-width="0.8"/>
<circle cx="771.67" cy="872.1" r="1.6" fill="#f29a73" stroke="#e64b0a" stroke-width="0.8"/>
<circle cx="795.51" cy="920.7" r="1.6" fill="#7cc8f7" stroke="#0a99ef" stroke-width="0.8"/>
<circle cx="795.51" cy="911.6" r="1.6" fill="#f29a73" stroke="#e64b0a" stroke-width="0.8"/>
<circle cx="819.35" cy="894.1" r="1.6" fill="#7cc8f7" stroke="#0a99ef" stroke-width="0.8"/>
<circle cx="819.35" cy="857.3" r="1.6" fill="#f29a73" stroke="#e64b0a" stroke-width="0.8"/>
<circle cx="843.19" cy="897.8" r="1.6" fill="#7cc8f7" stroke="#0a99ef" stroke-width="0.8"/>
<circle cx="843.19" cy="883.7" r="1.6" fill="#f29a73" stroke="#e64b0a" stroke-width="0.8"/>
<circle cx="867.03" cy="919.0" r="1.6" fill="#7cc8f7" stroke="#0a99ef" stroke-width="0.8"/>
<circle cx="867.03" cy="908.1" r="1.6" fill="#f29a73" stroke="#e64b0a" stroke-width="0.8"/>
<circle cx="890.87" cy="914.8" r="1.6" fill="#7cc8f7" stroke="#0a99ef" stroke-width="0.8"/>
<circle cx="890.87" cy="899.0" r="1.6" fill="#f29a73" stroke="#e64b0a" stroke-width="0.8"/>
<circle cx="914.71" cy="896.7" r="1.6" fill="#7cc8f7" stroke="#0a99ef" stroke-width="0.8"/>
<circle cx="914.71" cy="865.9" r="1.6" fill="#f29a73" stroke="#e64b0a" stroke-width="0.8"/>
<circle cx="938.55" cy="920.4" r="1.6" fill="#7cc8f7" stroke="#0a99ef" stroke-width="0.8"/>
<circle cx="938.55" cy="911.9" r="1.6" fill="#f29a73" stroke="#e64b0a" stroke-width="0.8"/>
<circle cx="962.39" cy="919.7" r="1.6" fill="#7cc8f7" stroke="#0a99ef" stroke-width="0.8"/>
<circle cx="962.39" cy="911.1" r="1.6" fill="#f29a73" stroke="#e64b0a" stroke-width="0.8"/>
<circle cx="986.23" cy="914.1" r="1.6" fill="#7cc8f7" stroke="#0a99ef" stroke-width="0.8"/>
<circle cx="986.23" cy="903.4" r="1.6" fill="#f29a73" stroke="#e64b0a" stroke-width="0.8"/>
<circle cx="1010.07" cy="921.2" r="1.6" fill="#7cc8f7" stroke="#0a99ef" stroke-width="0.8"/>
<circle cx="1010.07" cy="908.1" r="1.6" fill="#f29a73" stroke="#e64b0a" stroke-width="0.8"/>
<circle cx="1033.91" cy="885.6" r="1.6" fill="#7cc8f7" stroke="#0a99ef" stroke-width="0.8"/>
<circle cx="1033.91" cy="844.7" r="1.6" fill="#f29a73" stroke="#e64b0a" stroke-width="0.8"/>
<circle cx="1057.75" cy="920.7" r="1.6" fill="#7cc8f7" stroke="#0a99ef" stroke-width="0.8"/>
<circle cx="1057.75" cy="911.1" r="1.6" fill="#f29a73" stroke="#e64b0a" stroke-width="0.8"/>
<circle cx="1081.59" cy="889.2" r="1.6" fill="#7cc8f7" stroke="#0a99ef" stroke-width="0.8"/>
<circle cx="1081.59" cy="864.0" r="1.6" fill="#f29a73" stroke="#e64b0a" stroke-width="0.8"/>
<circle cx="1105.43" cy="921.5" r="1.6" fill="#7cc8f7" stroke="#0a99ef" stroke-width="0.8"/>
<circle cx="1105.43" cy="913.8" r="1.6" fill="#f29a73" stroke="#e64b0a" stroke-width="0.8"/>
<circle cx="1129.27" cy="911.6" r="1.6" fill="#7cc8f7" stroke="#0a99ef" stroke-width="0.8"/>
<circle cx="1129.27" cy="903.4" r="1.6" fill="#f29a73" stroke="#e64b0a" stroke-width="0.8"/>
<circle cx="1153.11" cy="905.2" r="1.6" fill="#7cc8f7" stroke="#0a99ef" stroke-width="0.8"/>
<circle cx="1153.11" cy="889.6" r="1.6" fill="#f29a73" stroke="#e64b0a" stroke-width="0.8"/>
<circle cx="1176.95" cy="901.1" r="1.6" fill="#7cc8f7" stroke="#0a99ef" stroke-width="0.8"/>
<circle cx="1176.95" cy="895.0" r="1.6" fill="#f29a73" stroke="#e64b0a" stroke-width="0.8"/>
<circle cx="1200.79" cy="906.0" r="1.6" fill="#7cc8f7" stroke="#0a99ef" stroke-width="0.8"/>
<circle cx="1200.79" cy="880.4" r="1.6" fill="#f29a73" stroke="#e64b0a" stroke-width="0.8"/>
<circle cx="1224.63" cy="888.5" r="1.6" fill="#7cc8f7" stroke="#0a99ef" stroke-width="0.8"/>
<circle cx="1224.63" cy="855.5" r="1.6" fill="#f29a73" stroke="#e64b0a" stroke-width="0.8"/>
<circle cx="1272.31" cy="919.3" r="1.6" fill="#7cc8f7" stroke="#0a99ef" stroke-width="0.8"/>
<circle cx="1272.31" cy="911.5" r="1.6" fill="#f29a73" stroke="#e64b0a" stroke-width="0.8"/>
<circle cx="1296.15" cy="909.0" r="1.6" fill="#7cc8f7" stroke="#0a99ef" stroke-width="0.8"/>
<circle cx="1296.15" cy="892.2" r="1.6" fill="#f29a73" stroke="#e64b0a" stroke-width="0.8"/>
<circle cx="1319.99" cy="880.1" r="1.6" fill="#7cc8f7" stroke="#0a99ef" stroke-width="0.8"/>
<circle cx="1319.99" cy="845.6" r="1.6" fill="#f29a73" stroke="#e64b0a" stroke-width="0.8"/>
<circle cx="1343.83" cy="908.2" r="1.6" fill="#7cc8f7" stroke="#0a99ef" stroke-width="0.8"/>
<circle cx="1343.83" cy="884.4" r="1.6" fill="#f29a73" stroke="#e64b0a" stroke-width="0.8"/>
<circle cx="1367.67" cy="899.3" r="1.6" fill="#7cc8f7" stroke="#0a99ef" stroke-width="0.8"/>
<circle cx="1367.67" cy="893.7" r="1.6" fill="#f29a73" stroke="#e64b0a" stroke-width="0.8"/>
<circle cx="1391.51" cy="921.1" r="1.6" fill="#7cc8f7" stroke="#0a99ef" stroke-width="0.8"/>
<circle cx="1391.51" cy="911.9" r="1.6" fill="#f29a73" stroke="#e64b0a" stroke-width="0.8"/>
<circle cx="1415.35" cy="869.3" r="1.6" fill="#7cc8f7" stroke="#0a99ef" stroke-width="0.8"/>
<circle cx="1415.35" cy="807.3" r="1.6" fill="#f29a73" stroke="#e64b0a" stroke-width="0.8"/>
<circle cx="1439.19" cy="915.9" r="1.6" fill="#7cc8f7" stroke="#0a99ef" stroke-width="0.8"/>
<circle cx="1439.19" cy="909.0" r="1.6" fill="#f29a73" stroke="#e64b0a" stroke-width="0.8"/>
<circle cx="1463.03" cy="901.9" r="1.6" fill="#7cc8f7" stroke="#0a99ef" stroke-width="0.8"/>
<circle cx="1463.03" cy="882.3" r="1.6" fill="#f29a73" stroke="#e64b0a" stroke-width="0.8"/>
<circle cx="1486.87" cy="895.9" r="1.6" fill="#7cc8f7" stroke="#0a99ef" stroke-width="0.8"/>
<circle cx="1486.87" cy="883.3" r="1.6" fill="#f29a73" stroke="#e64b0a" stroke-width="0.8"/>
<circle cx="1510.71" cy="919.6" r="1.6" fill="#7cc8f7" stroke="#0a99ef" stroke-width="0.8"/>
<circle cx="1510.71" cy="909.3" r="1.6" fill="#f29a73" stroke="#e64b0a" stroke-width="0.8"/>
<circle cx="1534.55" cy="915.9" r="1.6" fill="#7cc8f7" stroke="#0a99ef" stroke-width="0.8"/>
<circle cx="1534.55" cy="906.0" r="1.6" fill="#f29a73" stroke="#e64b0a" stroke-width="0.8"/>
<circle cx="1558.39" cy="918.1" r="1.6" fill="#7cc8f7" stroke="#0a99ef" stroke-width="0.8"/>
<circle cx="1558.39" cy="909.0" r="1.6" fill="#f29a73" stroke="#e64b0a" stroke-width="0.8"/>
<circle cx="1582.23" cy="915.2" r="1.6" fill="#7cc8f7" stroke="#0a99ef" stroke-width="0.8"/>
<circle cx="1582.23" cy="897.4" r="1.6" fill="#f29a73" stroke="#e64b0a" stroke-width="0.8"/>
<circle cx="1606.07" cy="877.7" r="1.6" fill="#7cc8f7" stroke="#0a99ef" stroke-width="0.8"/>
<circle cx="1606.07" cy="858.9" r="1.6" fill="#f29a73" stroke="#e64b0a" stroke-width="0.8"/>
<circle cx="1629.91" cy="917.1" r="1.6" fill="#7cc8f7" stroke="#0a99ef" stroke-width="0.8"/>
<circle cx="1629.91" cy="908.2" r="1.6" fill="#f29a73" stroke="#e64b0a" stroke-width="0.8"/>
<circle cx="1653.75" cy="920.8" r="1.6" fill="#7cc8f7" stroke="#0a99ef" stroke-width="0.8"/>
<circle cx="1653.75" cy="911.9" r="1.6" fill="#f29a73" stroke="#e64b0a" stroke-width="0.8"/>
</g>
<circle cx="1248.47" cy="850.5" r="7.2" fill="#e6e4e2"/>
<circle cx="1248.47" cy="850.5" r="5.1" fill="#078ce2"/>
<circle cx="1248.47" cy="785.6" r="6.8" fill="#dfe5ea"/>
<circle cx="1248.47" cy="785.6" r="5.0" fill="#e44a02"/>
<g>
<rect x="1055.1" y="750.1" width="184.7" height="86.7" rx="5" fill="#000" fill-opacity="0.8"/>
<polygon points="1239.8,787.6 1246.5,793.3 1239.8,799.3" fill="#000" fill-opacity="0.8"/>
<text x="1062.2" y="768.6" class="tt" font-weight="700">09 Oct 12:07</text>
<rect x="1063" y="780.9" width="13.4" height="12.5" fill="#e4e4e4" stroke="#d9d9d9" stroke-width="2"/>
<rect x="1063" y="798.3" width="13.4" height="13.1" fill="#ffffff" stroke="#0a99ef" stroke-width="2"/>
<rect x="1063" y="815.5" width="13.4" height="13.5" fill="#ffffff" stroke="#e64b0a" stroke-width="2"/>
<text x="1080" y="790.4" class="tt">Throughput: 2</text>
<text x="1080" y="808.75" class="tt">Median: 262.12</text>
<text x="1080" y="825.7" class="tt">95th percentile: 407.13</text>
</g>
</svg>
<div class="r" style="left:1813.5px;top:980px;width:73.4px;height:73.4px;border-radius:50%;background:#253a7f;box-shadow:0 2px 10px rgba(0,0,0,0.15)"></div>
<svg class="ch" width="1920" height="1080"><path d="M1876,1040 L1883,1055 L1860,1050 Z" fill="#253a7f"/>
<g stroke="#fff" stroke-width="6.6" stroke-linecap="round"><path d="M1839.3,1008.1 H1857.4"/><path d="M1843.3,1017.8 H1861"/><path d="M1839.3,1027.6 H1857.4"/></g></svg>
<div class="r" style="left:1913px;top:0;width:7px;height:744px;background:#888888"></div>
<div class="r" style="left:1913px;top:744px;width:7px;height:336px;background:#e3e3e3"></div>
</body></html>
